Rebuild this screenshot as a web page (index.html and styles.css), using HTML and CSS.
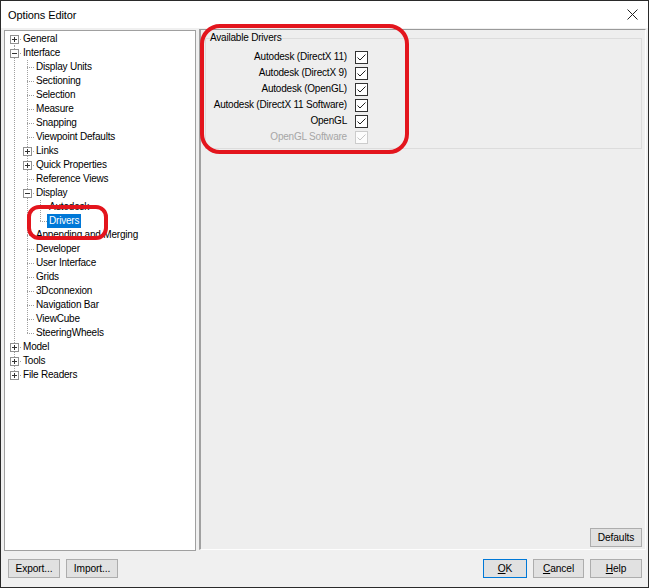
FILE: index.html
```html
<!DOCTYPE html>
<html>
<head>
<meta charset="utf-8">
<link rel="stylesheet" href="styles.css">
</head>
<body>
<div class="window">
  <div class="titlebar">
    <span class="title">Options Editor</span>
    <svg class="close" width="11" height="11" viewBox="0 0 11 11"><path d="M0.5 0.5L10.5 10.5M10.5 0.5L0.5 10.5" stroke="#222" stroke-width="1" fill="none"/></svg>
  </div>
  <div class="main">
    <div class="tree">
      <div class="row"><span class="c c-f"><svg class="exp" width="9" height="9"><rect x="0.5" y="0.5" width="8" height="8" fill="#fff" stroke="#919191"/><path d="M2 4.5H7M4.5 2V7" stroke="#333"/></svg></span><span class="label">General</span></div>
      <div class="row"><span class="c c-t"><svg class="exp" width="9" height="9"><rect x="0.5" y="0.5" width="8" height="8" fill="#fff" stroke="#919191"/><path d="M2 4.5H7" stroke="#333"/></svg></span><span class="label">Interface</span></div>
      <div class="row"><span class="c c-i"></span><span class="c c-t"></span><span class="label">Display Units</span></div>
      <div class="row"><span class="c c-i"></span><span class="c c-t"></span><span class="label">Sectioning</span></div>
      <div class="row"><span class="c c-i"></span><span class="c c-t"></span><span class="label">Selection</span></div>
      <div class="row"><span class="c c-i"></span><span class="c c-t"></span><span class="label">Measure</span></div>
      <div class="row"><span class="c c-i"></span><span class="c c-t"></span><span class="label">Snapping</span></div>
      <div class="row"><span class="c c-i"></span><span class="c c-t"></span><span class="label">Viewpoint Defaults</span></div>
      <div class="row"><span class="c c-i"></span><span class="c c-t"><svg class="exp" width="9" height="9"><rect x="0.5" y="0.5" width="8" height="8" fill="#fff" stroke="#919191"/><path d="M2 4.5H7M4.5 2V7" stroke="#333"/></svg></span><span class="label">Links</span></div>
      <div class="row"><span class="c c-i"></span><span class="c c-t"><svg class="exp" width="9" height="9"><rect x="0.5" y="0.5" width="8" height="8" fill="#fff" stroke="#919191"/><path d="M2 4.5H7M4.5 2V7" stroke="#333"/></svg></span><span class="label">Quick Properties</span></div>
      <div class="row"><span class="c c-i"></span><span class="c c-t"></span><span class="label">Reference Views</span></div>
      <div class="row"><span class="c c-i"></span><span class="c c-t"><svg class="exp" width="9" height="9"><rect x="0.5" y="0.5" width="8" height="8" fill="#fff" stroke="#919191"/><path d="M2 4.5H7" stroke="#333"/></svg></span><span class="label">Display</span></div>
      <div class="row"><span class="c c-i"></span><span class="c c-i"></span><span class="c c-t"></span><span class="label">Autodesk</span></div>
      <div class="row"><span class="c c-i"></span><span class="c c-i"></span><span class="c c-l"></span><span class="label selected">Drivers</span></div>
      <div class="row"><span class="c c-i"></span><span class="c c-t"></span><span class="label">Appending and Merging</span></div>
      <div class="row"><span class="c c-i"></span><span class="c c-t"></span><span class="label">Developer</span></div>
      <div class="row"><span class="c c-i"></span><span class="c c-t"></span><span class="label">User Interface</span></div>
      <div class="row"><span class="c c-i"></span><span class="c c-t"></span><span class="label">Grids</span></div>
      <div class="row"><span class="c c-i"></span><span class="c c-t"></span><span class="label">3Dconnexion</span></div>
      <div class="row"><span class="c c-i"></span><span class="c c-t"></span><span class="label">Navigation Bar</span></div>
      <div class="row"><span class="c c-i"></span><span class="c c-t"></span><span class="label">ViewCube</span></div>
      <div class="row"><span class="c c-i"></span><span class="c c-l"></span><span class="label">SteeringWheels</span></div>
      <div class="row"><span class="c c-t"><svg class="exp" width="9" height="9"><rect x="0.5" y="0.5" width="8" height="8" fill="#fff" stroke="#919191"/><path d="M2 4.5H7M4.5 2V7" stroke="#333"/></svg></span><span class="label">Model</span></div>
      <div class="row"><span class="c c-t"><svg class="exp" width="9" height="9"><rect x="0.5" y="0.5" width="8" height="8" fill="#fff" stroke="#919191"/><path d="M2 4.5H7M4.5 2V7" stroke="#333"/></svg></span><span class="label">Tools</span></div>
      <div class="row"><span class="c c-l"><svg class="exp" width="9" height="9"><rect x="0.5" y="0.5" width="8" height="8" fill="#fff" stroke="#919191"/><path d="M2 4.5H7M4.5 2V7" stroke="#333"/></svg></span><span class="label">File Readers</span></div>
    </div>
    <div class="panel">
      <fieldset class="group">
        <legend class="legend">Available Drivers</legend>
        <div class="drivers">
          <span class="dlabel">Autodesk (DirectX 11)</span><span class="cb"><svg width="13" height="13"><rect x="0.5" y="0.5" width="12" height="12" fill="#fff" stroke="#333"/><path d="M2.5 6.5L5 9L10.5 3.5" stroke="#222" fill="none"/></svg></span>
          <span class="dlabel">Autodesk (DirectX 9)</span><span class="cb"><svg width="13" height="13"><rect x="0.5" y="0.5" width="12" height="12" fill="#fff" stroke="#333"/><path d="M2.5 6.5L5 9L10.5 3.5" stroke="#222" fill="none"/></svg></span>
          <span class="dlabel">Autodesk (OpenGL)</span><span class="cb"><svg width="13" height="13"><rect x="0.5" y="0.5" width="12" height="12" fill="#fff" stroke="#333"/><path d="M2.5 6.5L5 9L10.5 3.5" stroke="#222" fill="none"/></svg></span>
          <span class="dlabel">Autodesk (DirectX 11 Software)</span><span class="cb"><svg width="13" height="13"><rect x="0.5" y="0.5" width="12" height="12" fill="#fff" stroke="#333"/><path d="M2.5 6.5L5 9L10.5 3.5" stroke="#222" fill="none"/></svg></span>
          <span class="dlabel">OpenGL</span><span class="cb"><svg width="13" height="13"><rect x="0.5" y="0.5" width="12" height="12" fill="#fff" stroke="#333"/><path d="M2.5 6.5L5 9L10.5 3.5" stroke="#222" fill="none"/></svg></span>
          <span class="dlabel disabled">OpenGL Software</span><span class="cb"><svg width="13" height="13"><rect x="0.5" y="0.5" width="12" height="12" fill="#fcfcfc" stroke="#cccccc"/><path d="M2.5 6.5L5 9L10.5 3.5" stroke="#c4c4c4" fill="none"/></svg></span>
        </div>
      </fieldset>
      <div class="panel-foot">
        <button class="btn btn-defaults">Defaults</button>
      </div>
    </div>
  </div>
  <div class="footer">
    <div class="btns">
      <button class="btn btn-w52">Export...</button>
      <button class="btn btn-w52">Import...</button>
    </div>
    <div class="btns">
      <button class="btn btn-ok"><u>O</u>K</button>
      <button class="btn btn-w51"><u>C</u>ancel</button>
      <button class="btn btn-w52"><u>H</u>elp</button>
    </div>
  </div>
  <div class="mark mark-group"></div>
  <div class="mark mark-item"></div>
</div>
</body>
</html>
```

FILE: styles.css
```css
* { box-sizing: border-box; }
html, body { margin: 0; padding: 0; background: #fff; }
.window {
  position: relative;
  width: 649px;
  height: 588px;
  border: 1px solid #2a2a2a;
  background: #f0f0f0;
  display: flex;
  flex-direction: column;
  font-family: "Liberation Sans", Arial, sans-serif;
  font-size: 10px;
  letter-spacing: -0.2px;
  color: #000;
}
.titlebar {
  height: 27px;
  background: #fff;
  display: flex;
  align-items: center;
  justify-content: space-between;
  padding: 0 10px 0 7px;
  flex: none;
}
.title { font-size: 11px; letter-spacing: -0.1px; }
.close { display: block; }
.main {
  flex: 1;
  display: flex;
  padding: 1px 2px 0 3px;
  min-height: 0;
}
.tree {
  width: 192px;
  margin-top: 1px;
  margin-right: 3px;
  border: 1px solid #a0a0a0;
  background: #fff;
  padding: 1px 0 0 3px;
}
.row {
  display: flex;
  align-items: center;
  height: 14px;
  line-height: 14px;
  white-space: nowrap;
}
.c {
  width: 13px;
  height: 14px;
  flex: none;
  display: flex;
  align-items: center;
  background-repeat: no-repeat;
}
.c-i {
  background-image: repeating-linear-gradient(to bottom, #a0a0a0 0 1px, transparent 1px 2px);
  background-size: 1px 14px;
  background-position: 6px 0;
}
.c-t {
  background-image: repeating-linear-gradient(to bottom, #a0a0a0 0 1px, transparent 1px 2px), repeating-linear-gradient(to right, #a0a0a0 0 1px, transparent 1px 2px);
  background-size: 1px 14px, 7px 1px;
  background-position: 6px 0, 6px 7px;
}
.c-l {
  background-image: repeating-linear-gradient(to bottom, #a0a0a0 0 1px, transparent 1px 2px), repeating-linear-gradient(to right, #a0a0a0 0 1px, transparent 1px 2px);
  background-size: 1px 7px, 7px 1px;
  background-position: 6px 0, 6px 7px;
}
.c-f {
  background-image: repeating-linear-gradient(to bottom, #a0a0a0 0 1px, transparent 1px 2px), repeating-linear-gradient(to right, #a0a0a0 0 1px, transparent 1px 2px);
  background-size: 1px 7px, 7px 1px;
  background-position: 6px 7px, 6px 7px;
}
.exp { display: block; margin-left: 2px; }
.label { margin-left: 2px; }
.selected {
  margin-left: 0;
  padding: 0 2px;
  background: #0078d7;
  color: #fff;
}
.panel {
  flex: 1;
  display: flex;
  flex-direction: column;
  border-top: 1px solid #9a9a9a;
  border-left: 2px solid #a0a0a0;
  border-right: 1px solid #fdfdfd;
  border-bottom: 1px solid #fdfdfd;
  background: #eeeeee;
  padding: 1px 3px 2px 4px;
  margin-bottom: 1px;
}
.group {
  margin: 0;
  border: 1px solid #dcdcdc;
  padding: 4px 0 3px 4px;
  min-width: 0;
}
.legend {
  padding: 0;
  margin-left: 0;
  line-height: 14px;
}
.drivers {
  display: grid;
  grid-template-columns: 137px 13px;
  column-gap: 8px;
  grid-auto-rows: 16px;
  align-items: center;
}
.dlabel { text-align: right; white-space: nowrap; line-height: 16px; }
.disabled { color: #a6a6a6; }
.cb svg { display: block; }
.panel-foot {
  margin-top: auto;
  display: flex;
  justify-content: flex-end;
}
.btn {
  height: 19px;
  border: 1px solid #adadad;
  background: #e1e1e1;
  font-family: "Liberation Sans", Arial, sans-serif;
  font-size: 10.2px;
  letter-spacing: -0.1px;
  color: #000;
  padding: 0;
  line-height: 17px;
}
.btn-defaults { width: 52px; }
.footer {
  height: 36px;
  flex: none;
  display: flex;
  justify-content: space-between;
  padding: 8px 6px 0 7px;
}
.btns { display: flex; gap: 6px; height: 19px; }
.btn-w52 { width: 52px; }
.btn-w51 { width: 51px; }
.btn-ok { width: 44px; border-color: #0078d7; }
.mark {
  position: absolute;
  border: 4px solid #e3151d;
}
.mark-group {
  left: 199px;
  top: 23px;
  width: 209px;
  height: 130px;
  border-radius: 20px;
}
.mark-item {
  left: 26px;
  top: 204px;
  width: 81px;
  height: 35px;
  border-radius: 12px;
}
```
